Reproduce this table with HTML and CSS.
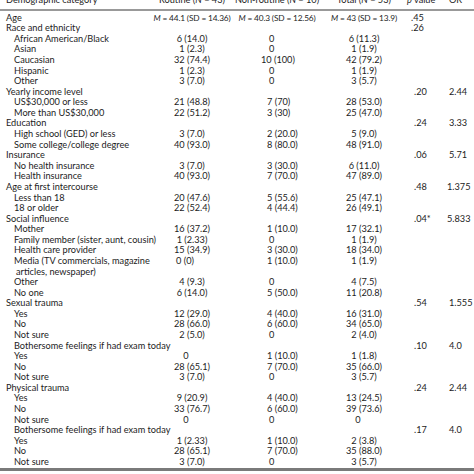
FILE: index.html
```html
<!DOCTYPE html>
<html>
<head>
<meta charset="utf-8">
<link rel="stylesheet" href="styles.css">
</head>
<body>
<div class="tbl">
  <div class="row head">
    <div class="lab cat">Demographic category</div>
    <div class="r">Routine (<i>N</i> = 43)</div>
    <div class="n ctr">Non-routine (<i>N</i> = 10)</div>
    <div class="t">Total (<i>N</i> = 53)</div>
    <div class="p hp"><i>p</i> value</div>
    <div class="o">OR</div>
  </div>
  <div class="rule"></div>
  <div class="body">
    <div class="row"><div class="lab cat">Age</div><div class="r m"><i>M</i> = 44.1 (SD = 14.36)</div><div class="n ctr m"><i>M</i> = 40.3 (SD = 12.56)</div><div class="t m"><i>M</i> = 43 (SD = 13.9)</div><div class="p pl">.45</div><div class="o"></div></div>
    <div class="row"><div class="lab cat">Race and ethnicity</div><div class="r"></div><div class="n"></div><div class="t"></div><div class="p pl">.26</div><div class="o"></div></div>
    <div class="row"><div class="lab">African American/Black</div><div class="r">6 (14.0)</div><div class="n z">0</div><div class="t">6 (11.3)</div><div class="p"></div><div class="o"></div></div>
    <div class="row"><div class="lab">Asian</div><div class="r">1 (2.3)</div><div class="n z">0</div><div class="t">1 (1.9)</div><div class="p"></div><div class="o"></div></div>
    <div class="row"><div class="lab">Caucasian</div><div class="r">32 (74.4)</div><div class="n w">10 (100)</div><div class="t">42 (79.2)</div><div class="p"></div><div class="o"></div></div>
    <div class="row"><div class="lab">Hispanic</div><div class="r">1 (2.3)</div><div class="n z">0</div><div class="t">1 (1.9)</div><div class="p"></div><div class="o"></div></div>
    <div class="row"><div class="lab">Other</div><div class="r">3 (7.0)</div><div class="n z">0</div><div class="t">3 (5.7)</div><div class="p"></div><div class="o"></div></div>
    <div class="row"><div class="lab cat">Yearly income level</div><div class="r"></div><div class="n"></div><div class="t"></div><div class="p">.20</div><div class="o">2.44</div></div>
    <div class="row"><div class="lab">US$30,000 or less</div><div class="r">21 (48.8)</div><div class="n">7 (70)</div><div class="t">28 (53.0)</div><div class="p"></div><div class="o"></div></div>
    <div class="row"><div class="lab">More than US$30,000</div><div class="r">22 (51.2)</div><div class="n">3 (30)</div><div class="t">25 (47.0)</div><div class="p"></div><div class="o"></div></div>
    <div class="row"><div class="lab cat">Education</div><div class="r"></div><div class="n"></div><div class="t"></div><div class="p">.24</div><div class="o">3.33</div></div>
    <div class="row"><div class="lab">High school (GED) or less</div><div class="r">3 (7.0)</div><div class="n">2 (20.0)</div><div class="t">5 (9.0)</div><div class="p"></div><div class="o"></div></div>
    <div class="row"><div class="lab">Some college/college degree</div><div class="r">40 (93.0)</div><div class="n">8 (80.0)</div><div class="t">48 (91.0)</div><div class="p"></div><div class="o"></div></div>
    <div class="row"><div class="lab cat">Insurance</div><div class="r"></div><div class="n"></div><div class="t"></div><div class="p">.06</div><div class="o">5.71</div></div>
    <div class="row"><div class="lab">No health insurance</div><div class="r">3 (7.0)</div><div class="n">3 (30.0)</div><div class="t">6 (11.0)</div><div class="p"></div><div class="o"></div></div>
    <div class="row"><div class="lab">Health insurance</div><div class="r">40 (93.0)</div><div class="n">7 (70.0)</div><div class="t">47 (89.0)</div><div class="p"></div><div class="o"></div></div>
    <div class="row"><div class="lab cat">Age at first intercourse</div><div class="r"></div><div class="n"></div><div class="t"></div><div class="p">.48</div><div class="o ol">1.375</div></div>
    <div class="row"><div class="lab">Less than 18</div><div class="r">20 (47.6)</div><div class="n">5 (55.6)</div><div class="t">25 (47.1)</div><div class="p"></div><div class="o"></div></div>
    <div class="row"><div class="lab">18 or older</div><div class="r">22 (52.4)</div><div class="n">4 (44.4)</div><div class="t">26 (49.1)</div><div class="p"></div><div class="o"></div></div>
    <div class="row"><div class="lab cat">Social influence</div><div class="r"></div><div class="n"></div><div class="t"></div><div class="p">.04*</div><div class="o ol">5.833</div></div>
    <div class="row"><div class="lab">Mother</div><div class="r">16 (37.2)</div><div class="n">1 (10.0)</div><div class="t">17 (32.1)</div><div class="p"></div><div class="o"></div></div>
    <div class="row"><div class="lab">Family member (sister, aunt, cousin)</div><div class="r">1 (2.33)</div><div class="n z">0</div><div class="t">1 (1.9)</div><div class="p"></div><div class="o"></div></div>
    <div class="row"><div class="lab">Health care provider</div><div class="r">15 (34.9)</div><div class="n">3 (30.0)</div><div class="t">18 (34.0)</div><div class="p"></div><div class="o"></div></div>
    <div class="row"><div class="lab">Media (TV commercials, magazine</div><div class="r rz2">0 (0)</div><div class="n">1 (10.0)</div><div class="t">1 (1.9)</div><div class="p"></div><div class="o"></div></div>
    <div class="row"><div class="lab cont">articles, newspaper)</div><div class="r"></div><div class="n"></div><div class="t"></div><div class="p"></div><div class="o"></div></div>
    <div class="row"><div class="lab">Other</div><div class="r">4 (9.3)</div><div class="n z">0</div><div class="t">4 (7.5)</div><div class="p"></div><div class="o"></div></div>
    <div class="row"><div class="lab">No one</div><div class="r">6 (14.0)</div><div class="n">5 (50.0)</div><div class="t">11 (20.8)</div><div class="p"></div><div class="o"></div></div>
    <div class="row"><div class="lab cat">Sexual trauma</div><div class="r"></div><div class="n"></div><div class="t"></div><div class="p">.54</div><div class="o">1.555</div></div>
    <div class="row"><div class="lab">Yes</div><div class="r">12 (29.0)</div><div class="n">4 (40.0)</div><div class="t">16 (31.0)</div><div class="p"></div><div class="o"></div></div>
    <div class="row"><div class="lab">No</div><div class="r">28 (66.0)</div><div class="n">6 (60.0)</div><div class="t">34 (65.0)</div><div class="p"></div><div class="o"></div></div>
    <div class="row"><div class="lab">Not sure</div><div class="r">2 (5.0)</div><div class="n z">0</div><div class="t">2 (4.0)</div><div class="p"></div><div class="o"></div></div>
    <div class="row"><div class="lab">Bothersome feelings if had exam today</div><div class="r"></div><div class="n"></div><div class="t"></div><div class="p">.10</div><div class="o">4.0</div></div>
    <div class="row"><div class="lab">Yes</div><div class="r rz">0</div><div class="n">1 (10.0)</div><div class="t">1 (1.8)</div><div class="p"></div><div class="o"></div></div>
    <div class="row"><div class="lab">No</div><div class="r">28 (65.1)</div><div class="n">7 (70.0)</div><div class="t">35 (66.0)</div><div class="p"></div><div class="o"></div></div>
    <div class="row"><div class="lab">Not sure</div><div class="r">3 (7.0)</div><div class="n z">0</div><div class="t">3 (5.7)</div><div class="p"></div><div class="o"></div></div>
    <div class="row"><div class="lab cat">Physical trauma</div><div class="r"></div><div class="n"></div><div class="t"></div><div class="p">.24</div><div class="o">2.44</div></div>
    <div class="row"><div class="lab">Yes</div><div class="r">9 (20.9)</div><div class="n">4 (40.0)</div><div class="t">13 (24.5)</div><div class="p"></div><div class="o"></div></div>
    <div class="row"><div class="lab">No</div><div class="r">33 (76.7)</div><div class="n">6 (60.0)</div><div class="t">39 (73.6)</div><div class="p"></div><div class="o"></div></div>
    <div class="row"><div class="lab">Not sure</div><div class="r rz">0</div><div class="n z">0</div><div class="t tz">0</div><div class="p"></div><div class="o"></div></div>
    <div class="row"><div class="lab">Bothersome feelings if had exam today</div><div class="r"></div><div class="n"></div><div class="t"></div><div class="p">.17</div><div class="o">4.0</div></div>
    <div class="row"><div class="lab">Yes</div><div class="r">1 (2.33)</div><div class="n">1 (10.0)</div><div class="t">2 (3.8)</div><div class="p"></div><div class="o"></div></div>
    <div class="row"><div class="lab">No</div><div class="r">28 (65.1)</div><div class="n">7 (70.0)</div><div class="t">35 (88.0)</div><div class="p"></div><div class="o"></div></div>
    <div class="row"><div class="lab">Not sure</div><div class="r">3 (7.0)</div><div class="n z">0</div><div class="t">3 (5.7)</div><div class="p"></div><div class="o"></div></div>
  </div>
  <div class="bottom"></div>
</div>
</body>
</html>
```

FILE: styles.css
```css
html, body {
  margin: 0;
  padding: 0;
  background: #fff;
}
body {
  width: 474px;
  height: 474px;
  overflow: hidden;
  font-family: Lato, "Open Sans", sans-serif;
  font-size: 9.2px;
  color: #1c1c1c;
}
.tbl {
  display: flex;
  flex-direction: column;
  margin-top: -5.3px;
}
.row {
  display: grid;
  grid-template-columns: 150px 84px 86px 88px 34px 32px;
  height: 10.58px;
  line-height: 10.58px;
  white-space: nowrap;
}
.rule {
  height: 1.6px;
  background: #999;
  margin-top: 3.8px;
  margin-bottom: 2px;
}
.body {
  display: flex;
  flex-direction: column;
}
.bottom {
  height: 3px;
  background: #7a7a7a;
  margin-top: 0.4px;
}
.lab {
  padding-left: 14px;
}
.lab.cat {
  padding-left: 6px;
}
.lab.cont {
  padding-left: 16px;
}
.r, .t {
  text-align: center;
}
.m {
  font-size: 8.3px;
  letter-spacing: -0.15px;
}
.n {
  padding-left: 33px;
}
.n.ctr {
  padding-left: 0;
  text-align: center;
}
.n.z {
  padding-left: 35px;
}
.n.w {
  padding-left: 27px;
}
.r.rz {
  padding-right: 12px;
}
.r.rz2 {
  padding-right: 14px;
}
.t.tz {
  padding-right: 12px;
}
.p {
  padding-left: 6px;
}
.p.pl {
  padding-left: 3px;
}
.p.hp {
  margin-left: -7px;
}
.o {
  padding-left: 7px;
}
.o.ol {
  padding-left: 5px;
}
i {
  font-style: italic;
}
```
